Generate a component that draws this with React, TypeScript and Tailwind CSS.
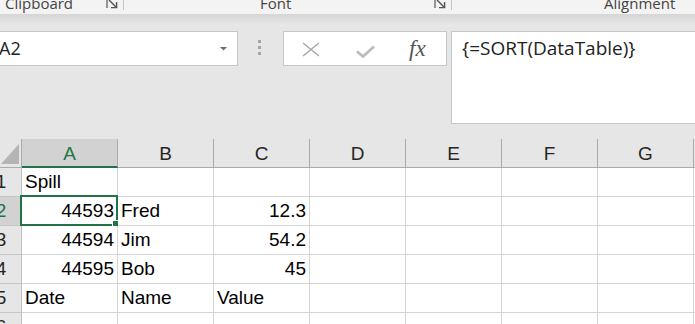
import React from "react";

const cols = ["A", "B", "C", "D", "E", "F", "G"];

type Cell = { v: string; right?: boolean };
const rows: { n: string; cells: Cell[] }[] = [
  { n: "1", cells: [{ v: "Spill" }] },
  { n: "2", cells: [{ v: "44593", right: true }, { v: "Fred" }, { v: "12.3", right: true }] },
  { n: "3", cells: [{ v: "44594", right: true }, { v: "Jim" }, { v: "54.2", right: true }] },
  { n: "4", cells: [{ v: "44595", right: true }, { v: "Bob" }, { v: "45", right: true }] },
  { n: "5", cells: [{ v: "Date" }, { v: "Name" }, { v: "Value" }] },
  { n: "6", cells: [] },
];

function Launcher() {
  return (
    <svg width="12" height="9" viewBox="0 0 12 9" className="shrink-0">
      <path d="M1 -2 V8" stroke="#555" strokeWidth="1.2" fill="none" />
      <path d="M3 0 L10 7" stroke="#555" strokeWidth="1.4" fill="none" />
      <path d="M5 7.6 H10.6 V2" stroke="#555" strokeWidth="1.4" fill="none" />
    </svg>
  );
}

export default function App() {
  return (
    <div
      className="w-[695px] h-[324px] overflow-hidden bg-[#e6e6e6] flex flex-col"
      style={{ fontFamily: "'Liberation Sans', Arial, sans-serif" }}
    >
      {/* Ribbon group labels */}
      <div
        className="h-[14px] shrink-0 bg-[#f3f3f3] flex overflow-hidden text-[15px] leading-[15px] text-[#444]"
        style={{ fontFamily: "'Open Sans', sans-serif" }}
      >
        <div className="w-[123px] flex items-start">
          <span className="ml-[5px] -mt-[4px]">Clipboard</span>
          <span className="ml-auto mr-[5px]">
            <Launcher />
          </span>
        </div>
        <div className="w-px h-[10px] bg-[#c8c8c8]" />
        <div className="w-[327px] flex items-start">
          <span className="ml-[136px] -mt-[4px]">Font</span>
          <span className="ml-auto mr-[5px]">
            <Launcher />
          </span>
        </div>
        <div className="w-px h-[10px] bg-[#c8c8c8]" />
        <div className="flex-1 flex items-start">
          <span className="ml-[152px] -mt-[4px]">Alignment</span>
        </div>
      </div>
      <div className="h-[10px] shrink-0 bg-linear-to-b from-[#d6d6d6] to-[#e6e6e6]" />

      {/* Formula bar */}
      <div
        className="mt-[7px] h-[93px] shrink-0 flex items-start text-[18px] leading-[24px] text-[#222]"
        style={{ fontFamily: "'Open Sans', sans-serif" }}
      >
        <div className="-ml-[10px] w-[248px] h-[35px] shrink-0 bg-white border border-[#c6c6c6] flex items-start pl-[8px] pt-[4px]">
          <span>A2</span>
          <svg width="8" height="4" viewBox="0 0 8 4" className="ml-auto mr-[9px] mt-[11px]">
            <polygon points="0,0 7,0 3.5,3.5" fill="#6d6d6d" />
          </svg>
        </div>
        <div className="ml-[20px] pt-[9px] flex flex-col gap-[3px] shrink-0">
          <div className="w-[3px] h-[3px] bg-[#a5a5a5]" />
          <div className="w-[3px] h-[3px] bg-[#a5a5a5]" />
          <div className="w-[3px] h-[3px] bg-[#a5a5a5]" />
        </div>
        <div className="ml-[22px] w-[164px] h-[35px] shrink-0 bg-white border border-[#c6c6c6] flex items-center pt-[2px]">
          <svg width="18" height="15" viewBox="0 0 18 15" className="ml-[18px]">
            <path d="M1 1 L17 14 M17 1 L1 14" stroke="#a9a9a9" strokeWidth="1.6" fill="none" />
          </svg>
          <svg width="19" height="13" viewBox="0 0 19 13" className="ml-[36px] mt-[4px]">
            <polyline points="1,6.5 7,11.5 18,1.5" stroke="#bcbcbc" strokeWidth="2.8" fill="none" />
          </svg>
          <span
            className="ml-[34px] italic text-[23px] leading-[22px] text-[#555] -mt-[2px]"
            style={{ fontFamily: "'Liberation Serif', 'Times New Roman', serif" }}
          >
            fx
          </span>
        </div>
        <div className="ml-[4px] w-[260px] h-[93px] shrink-0 bg-white border border-[#c6c6c6] pl-[10px] pt-[4px] text-[19px]">
          {"{=SORT(DataTable)}"}
        </div>
      </div>

      {/* Grid */}
      <div className="mt-[15px] flex flex-col text-[19px] text-black">
        {/* Column headers */}
        <div className="h-[29px] flex shrink-0">
          <div className="-ml-[19px] w-[41px] shrink-0 border-r border-b border-[#ababab] flex items-end justify-end pr-[2px] pb-[3px]">
            <svg width="18" height="20" viewBox="0 0 18 20">
              <polygon points="18,0 18,20 0,20" fill="#b4b4b4" />
            </svg>
          </div>
          {cols.map((c) =>
            c === "A" ? (
              <div
                key={c}
                className="w-[96px] shrink-0 bg-[#d2d2d2] border-r border-r-[#ababab] border-b-2 border-b-[#217346] text-center leading-[27px] pt-[1px] text-[#217346]"
              >
                {c}
              </div>
            ) : (
              <div
                key={c}
                className="w-[96px] shrink-0 border-r border-b border-[#ababab] text-center leading-[27px] pt-[1px] text-[#262626]"
              >
                {c}
              </div>
            )
          )}
          <div className="w-[96px] shrink-0 border-r border-b border-[#ababab]" />
        </div>

        {rows.map((r) => (
          <div key={r.n} className="h-[29px] flex shrink-0">
            <div
              className={
                r.n === "2"
                  ? "-ml-[19px] w-[41px] shrink-0 bg-[#d2d2d2] border-r border-r-[#217346] border-b border-b-[#c6c6c6] text-center leading-[28px] text-[#217346]"
                  : "-ml-[19px] w-[41px] shrink-0 border-r border-r-[#bfbfbf] border-b border-b-[#c6c6c6] text-center leading-[28px] text-[#262626]"
              }
            >
              {r.n}
            </div>
            {cols.map((c, i) => {
              const cell = r.cells[i];
              const selected = r.n === "2" && c === "A";
              return (
                <div
                  key={c}
                  className={
                    "relative w-[96px] shrink-0 bg-white border-r border-b border-[#d4d4d4] px-[3px] leading-[28px] whitespace-nowrap " +
                    (cell?.right ? "text-right" : "text-left")
                  }
                >
                  {cell?.v ?? ""}
                  {selected && (
                    <div className="absolute -left-[2px] -top-[2px] -right-[1px] -bottom-[1px] border-2 border-[#217346]">
                      <div className="absolute -right-[4px] -bottom-[4px] w-[8px] h-[8px] bg-[#217346] border border-white" />
                    </div>
                  )}
                </div>
              );
            })}
            <div className="w-[96px] shrink-0 bg-white border-r border-b border-[#d4d4d4]" />
          </div>
        ))}
      </div>
    </div>
  );
}
